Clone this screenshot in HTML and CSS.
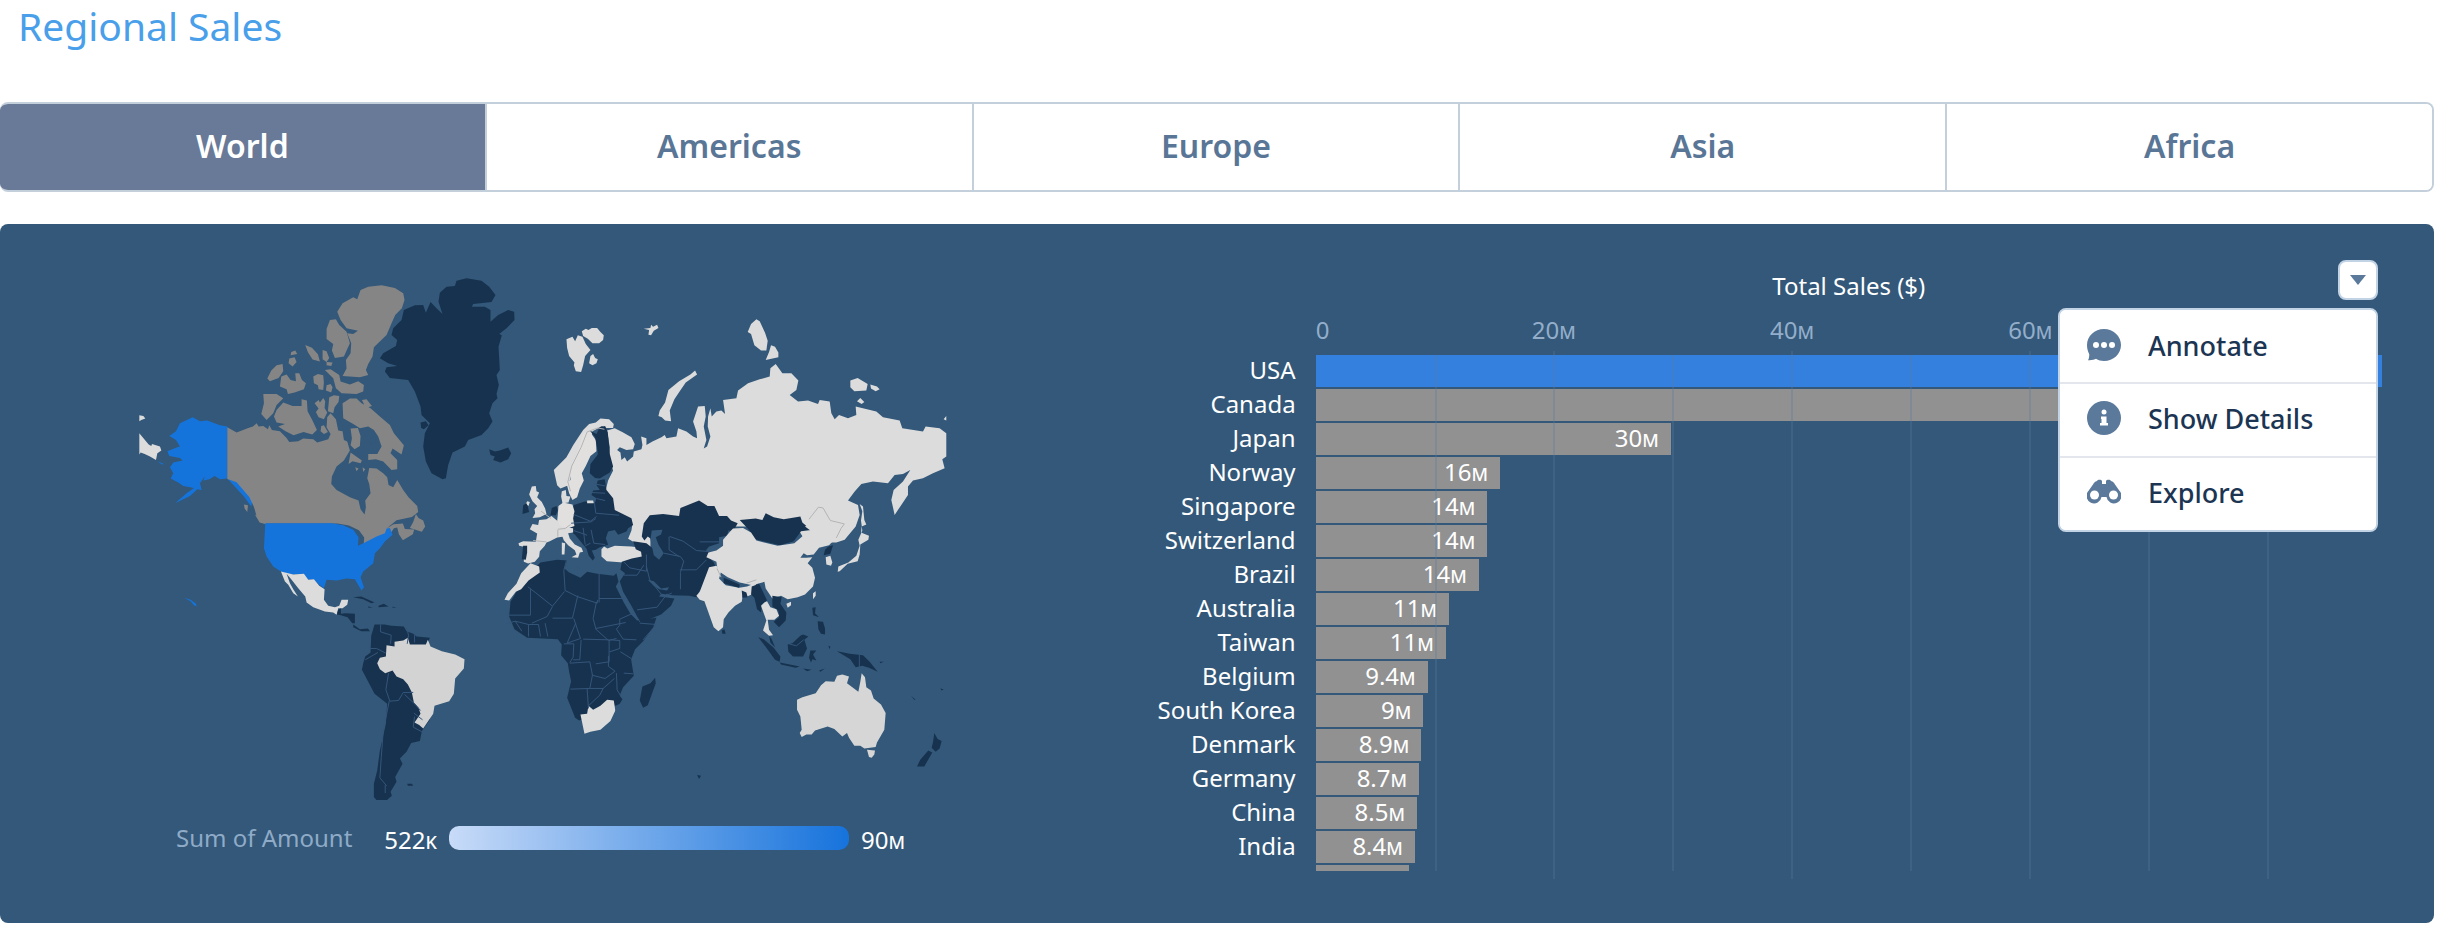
FILE: index.html
```html
<!DOCTYPE html>
<html lang="en">

<head>
    <meta charset="UTF-8">
    <meta name="viewport" content="width=device-width, initial-scale=1.0">
    <title>Regional Sales</title>
    <link rel="stylesheet" href="styles.css">
</head>

<body>
    <h1 class="title">Regional Sales</h1>

    <nav class="tabs">
        <button type="button" class="tab active">World</button>
        <button type="button" class="tab">Americas</button>
        <button type="button" class="tab">Europe</button>
        <button type="button" class="tab">Asia</button>
        <button type="button" class="tab">Africa</button>
    </nav>

    <main class="panel">
        <section class="map">
            <svg class="map__svg" viewBox="0 0 2520 1620" role="img" aria-label="Sum of Amount by country">
                <!-- north america -->
                <g>
                    <path class="usa" d="M218 472l22 12 22-2 38 14 22 4v156l-22 2-16-10-16 10-18 4 5-14-15 22 5 20-13-2-22 20-45 22 35-30 22-16-32-6-15-10-23-12 8-16-10-18 10-14 28-6-8-8-32-6-6-14 30-12 8-2-12-20-20-12 20-14 12-24zM322 656l28 10 12-2 16 26 20 26-4 24-22-30-22-24zM112 604l20 8-6 2zM192 1014l20 6 16 12 2 8-8-4-10-12z"/>
                    <path class="canada" d="M322 502l28 16 35-14 14-4 11-10 6 10 14-2 14 10 4-12 8 14 24 4 20 20 8 12 27-2 15-8 30 2 12 10 33-10 7-16-12-20 2-30 10-12 16 18 7 34 13 2 4 26 10 5 8 27-18 30-22 18-14 30-2 22 16 18 40 22 26 10 6 26 12 16 4-22-2-20 16-22-4-28-6-17 6-31 22 2 20 14 12 12 4 23 14 7 12-22 18 30 16 22 26 26 3 18-19 15-46 10-29 24 20-12 28-2 6 16 28 2-4 14-30 18-12-18-5-20-10 2-10 16-25 10-35 18-21 10 2-26-16-22-30-14-34-6H436l-26-22-8-28-14-30-38-44-28-10z"/>
                    <path class="canada" d="M888 762l-8 24-10 18 36 12 10-16-6-18-14-8zM405 764l22 10 14 20-22-6zM372 734l12 2-2 20-8-10zM700 112l12 6 10-28 23-10 40-4 40 8 25 16 4 20-8 25-20 20-11 25-15 35-24 23-14 14-4 28-13 22-7 18 7 15-25 7-52-4 12-22-2-26 14-20 2-30-12-30 18 2 14-10-34-7-18-25-10-25 16-25zM630 180l18-2 10 17 22 20 10 35-18 40-27 4-9-22 4-20-20-15v-30zM615 330l17-2 26 17 4 20 28 9 25-10 17 11-2 20-20 7-45-2-17-15-8-30zM556 255l20 8 18 20 6 22-22-6-14-22zM608 270l12 4 8 20-8 12-12-8zM620 306l18 2-4 10-14-2zM508 296l16-4 6 14-12 14-12-10zM514 276l12-4 6 10-20 4zM470 316l18-4 2 22-14 20-26 10-8-8 12-24zM484 350l16-6 12 16 16 4-2-24 12 0 8 20 12 10-6 18-28 10-20 4-4-14-20-8zM580 350l14-8 16 4 2 22-2 22-14-2-2-12-12-6zM620 376l12-4 6 10-4 16-16-6zM430 402l40 0 20 13-20 20-10 25-20 20-16-18 8-32zM470 450l20-22 28 10 27 0 0-20 16 4 2 32 14 26 14 30-14 14-26-8-30 10-24-12-22-14 20-8-25-4-8-18zM584 430l12-10 4 8 10-14 6 10-2 20 8 14-10 20-16-6-8-16 8-10zM628 412l14-6 16 2-2 18-12 16-4 18-16-6zM604 498l8-2 12 20-12 6-10-8zM668 430l22-14 20 0 15 14 27 15 28 25 30 25 12 25 30 36-7 28-27-18-6 14 20 20 0 28-17 2-25-25-22-7-23 2 0-18 27 0 13-22-10-30-13-20-17-10-25 5-20-13-30-17zM726 420l14-2 16 20-18 6zM692 506l22-2 8 24-2 30-16 10-12-12 4-20zM692 578l34 24-4 8-24-6-12 8zM706 622l10 4-6 8zM728 622l8 6-6 8z"/>
                    <path class="sea" d="M756 530l12 6-4 14-12 2-4-8z"/>
                    <path class="light" d="M58 466l12 2 6 8-12 4-6 4zM58 520l28 34 8 4 2-6 24 8 4 12-12 8-4 20-18-10-16-8-12-4-4 6z"/>
                    <path class="dark" d="M1005 78l5-16 30-7 45 7 23 18 19 25-12 21-55 6-4 8 39 0 17 10 0 35 23-20 30-15 18 5 1 25-24 25-22 17 8 4-10 34 4 70-10 15 7 30-7 27 3 13-15 15-10 30 10 25-13 20-20 20-40 15-10 20-37 18-13 37-7 40-10 3-33-18-17-35-8-45 5-40 15-30-25-25-3-25-17-45-20-35-55-6-15-19 5-13 32-4-27-8-25-15 10-15 38-22 4-18-17-15 5-20 25-25 7-30 33-14 25-1 8 23 14-32 18 19 18 17-12-37 4-27 20-18zM902 488l16-4 8 12-14 12-8-4zM1108 568l17 7 15-3 25-9 9 17-9 18-23 10-22-8 5-10-13-5z"/>
                </g>

                <!-- usa, central and south america -->
                <g transform="translate(0 720)">
                    <path class="usa" d="M436 70h200l34 6 30 14 16 22-2 26 21-10 35-18 25-10 5-14 10-2 8 21-23 20-15 20-15 15-5 30-30 25-8 17 10 30-7 10-13-22-7-12-25-2-30 6-30-2-8 25-14-10-18-17-18 2-10-18-32 2-20-2-17-7-23-15-20-30-8-25z"/>
                    <path class="light" d="M483 215l37 9 32-2 13 18 17-2 16 20 16 10-2 32 13 18 20 4 13-4 7-18 20 0-3 15-14 10-13 0-5 20-10-7-25-3-35-13-20-14-4-18-21-25-20-25-15-18 10 28 10 18 14 22-14-10-15-25-10-10z"/>
                    <path class="dark" d="M655 330l8-4 0 16 14-2 28 2 0 28-8 0-14-18-20-6-12-2zM700 374l20 14 24-2 6 8-26 0-24-12zM700 292l24-2 40 18-10 2-24-12zM776 318l16-6 14 8-30 2zM744 320l14 2-12 2zM818 321l12 1-12 2zM764 374l20 0 10 0 20 4 38 2 8 14 20 8 10 8 40 4-10 26 10 220-24 34-6 30-26 6-14 26-20 20 8 16-22 40 4 14-18 30 4 12-14 12 24 20-4 8-34-6-26-30 0-40 10-40 8-60 18-80 4-60-38-30-38-72 4-20 6-20 16-12 2-50zM862 852l14 0 4 6-16 0z"/>
                    <path class="brazil" d="M800 436l24 4 0-14 26-4 14-8 6 20 48 0 6-14 8 20 34 14 40 10 28 14-2 28-26 30-4 46-14 22-44 14-4 24-30 44-12-10-14-8 18-26-6-18-14-16-6-30-12-24-14-16-20-8-12-18-22 8-16-12-8-18 8-16 18-4z"/>
                    <path class="borders" d="M750 446l20 0 28 14M736 480l24-14 14-8M782 374l0 22 32 10-2 26M860 384l6 22-4 26M884 406l0 22M806 520l-8 50 12 34 26-2 14-24 30 0M854 584l30 28 18 20M882 640l26 20M808 604l-18 90-6 80-4 60 20 24M796 856l0 24M884 650l-4 32 26 14"/>
                </g>

                <!-- europe, russia -->
                <g transform="translate(1140 0)">
                    <path class="light" d="M322 512l23-7 25 13 25 14 10 20-5 16-20 2-20-8-8 8 10 8 3 22 10-8 7 13 18-15 2-15 23-7 3-13-4-25 16 5 0 20 18-10 27-13 10-7 5 10 30-5 5-25 25 10 20 15 12 5-2-20-10-30 15-45 20-2 3 32-6 30 8 40-8 26 10-6 10-30-8-30 1-30 7-25 4 25 14-15 15-3 11 10-6-42 40-5 5-23 30-22 35-12 30-8 2-25 16-13 20 28 27 0 21 22-6 28-20 15 25 20 30-3 30 10 5-12 30 5 5 35 10 18 13-13 27 10 25-10-2-25 62 15 20 17 50 10 8 23 62 10 8-15 42 5 20 15v70l-12 8 7 27-35 15-30 15-30 7-15 18 0 25-20 30-20 30-10-45 7-30 28-25 22-35-22 12-25 3-20 25-45-5-35 7-20 23-20 27 30 13 5 30-12 35-33 40-25 8-90 0-30-48H452l0 72-32-15-35-20 10-25 3-20-33-15-20-15-10-35-20-25 10-40 15-30-12-40 2-30z"/>
                    <path class="light" d="M200 238l18-8 8 14 8-18 14 4 10 22 14 18-16 18-6 28-6 20-16-2-6-18 2-8-16-20-6-24zM246 214l12-8 8 4 10-6 16 0 10 12 10 10-2 14-12 10-20 0-14-14-14-8zM272 288l8-6 6 12 8 4-4 12-12 6-10-6zM432 206l20-2 2-10 6 6 12-6 4 10-14 8-8 14-8-2 2-14zM770 178l10 6 16 34 8 24-4 30-16 0-20-16-10-34-10-6 10-24zM814 256l12 4 10 18 0 14-38 8 10-24zM586 332l6 12-34 24-18 26-16 24-14 34 4 32-18-2-10-10-10-4 4-16 16-24 10-38 32-26 34-20zM1052 362l22-8 30 18-4 20-36 2-12-12zM1112 374l20 6 8 8-12 6-14-8zM1072 424l10-10 12 12-8 6zM1332 478l8-10 0 14z"/>
                    <path class="light" d="M162 630l38-38 20-36 30-46 18-18 20-4 14-12 26 2 14 14-2 12-20 0-14-6-16 10-12 6-4 20-18 26-12 30-28 50-10 36-24 10-10-10z"/>
                    <path class="sweden" d="M250 520l18-8 20 28 2 34-18 14-14 30-12 22 6 22-12 24-8 26-14 8-10-20-8-30 12-10 4-50 16-30z"/>
                    <path class="dark" d="M270 512l20 10 10-20 16-4 8 20 4 40 2 24 10 38-10 18-30 18-14-2-16-14 2-28 22-28-2-22-6-30z"/>
                    <path class="light" d="M96 680l12-2 2 16 8 4-6 14 14 14 10 20 4 16-20 10-22 2 8-14-2-12 8-10-14-14-10-20zM82 724l8 2-4 12-8-6zM186 694l12-4 2 18 12 2-6 18-18 2-4-20z"/>
                    <path class="dark" d="M70 736l10-6 4 10 4 16-20 6zM156 744l14-6 4 14-6 14-16 0zM222 735l33-10 30 5 5-15-15-10 5-13 20-2-10-15 4-13 21-4 5 32 20 25 5 35 50 25 5 20-15 10-5 10-25 10-10-15-20 5-7 20 7 20-25 7-12 8-12 2 9 22-6 8-12-14-7-22-17-20-18-22-12-8-5-20 3-25z"/>
                    <path class="light" d="M262 722l18 0 2 8-20 0z"/>
                    <path class="germany" d="M176 738l14-10 28 6 6 20-4 22 4 22-20 8-24-2-8-20 2-20z"/>
                    <path class="dark" d="M450 766l40-4 48 6 4-24 56-22 26 16 20 0 14 30 24 0 12 14 20 8-14 24-14-2-4 16-24 4 0 18-30 10-10 12 18 6-16 30-14 8-46-4-36 0-36 4-8-24-8-40-28-22-10 12-8-12 6-40zM720 780l48-4 20 4 10-20 24 12 30 6 50-8 6 18 26 22-30 4-22 30-42 12-74-18-18-28z"/>
                    <path class="borders" d="M284 730l4 30 70 6M276 698l40 2M290 716l26 6M284 672l32 6M290 770l-18 14-50-20"/>
                </g>

                <!-- europe south, africa, asia, oceania -->
                <g transform="translate(1140 720)">
                    <path class="light" d="M98 72l17 3 3-15 22-2 15-10 20 17 5 14 20 4 20 2 0 13-15 2 5 16 15 18 20 10 5 12-10 2-5 16-20-2 15-8-5-13-20-15-13-15-4-10-16 2-22 11-10 4-5 10-15 16-2 17-13 15-20 5-13-5 0-45-14-3-2-8 14-6 38 2 4-25-22-13zM186 128l10 2-2 34-8 0zM305 148l8-8 10 6 22-8 50 2 30 4 2 30-36 6-20 8-50-4-16-14z"/>
                    <path class="dark" d="M70 138l12 0 0 20-4 22-12-2z"/>
                    <path class="dark" d="M400 124l40 6 20 16 28 18 34-2 30 6 56-16 34 36 8 18-20 20-10 30-20 16-10 20-22-4-50-2-34-4-6 8 46 6-10 22-30 26-60 24-10-14-20-38-24-40-10-32 16-24-14-10 4-24 30-10 30-6-2-14-16-8z"/>
                    <path class="dark" d="M122 188l50-8 30 2-8 24 14 12 34 16 20-18 30 6 50 6 8-8 6 26-8 14 24 48 20 34 20 20 58-8-10 30-30 40-24 24-12 30 8 50-32 34-10 24 8 12-8 14-12 6-20-6-60 40-30 10-12-8-24-60 12-50-6-28-4-26-20-24 2-32-12-16-44-2-48-2-38-26-16-38 4-44 12-20 24-44zM466 534l2 16-24 66-14 8-10-22 8-42 24-10zM808 408l8 10 10 24-14-14z"/>
                    <path class="light" d="M92 190l26 10 2 18-34 24-22 26-16 8-20 26-14-2 10-20 26-28 14-32zM242 644l20-2 4-24 14 12 22-12 20-18 20 2 4 26 0 6-14 30-30 26-30 6-18 6z"/>
                    <path class="borders" d="M200 182l-8 30 4 60 36 18 60 20 2-10M298 222v86M298 296h78M194 275l-36 44-50-40-24-18M92 266l0 80-70 0M158 320l-16 30-46 20M158 355l60 0 16-68M222 356l20 60-40 14 26-60M290 306l-10 50 8 30 40-8 50-10M358 378l-8 10 20 30 40 2M286 386l40 36 24-6M244 420l-4 60-20 0M250 418l78 2 0 66-40 6M330 420l30 2 0 24-30 10M362 456l32 20M210 490l60-4 8 40-8 40-58 2M276 526l40 10 30-22-20-14 0-32M270 566h40l34-30M350 520l2 50 14 24M262 566l4 60M310 566l-10 20-34 32M192 432l30 0-2 40-10 16M20 372l26-8 20 30M46 364l40 10 0 36M86 374l30 0 6 36M136 370l8 40M380 296l20 40 20 30M400 340l-40 18 0 20M420 370l50 4-40 46M372 520l28 2M370 184l20 20 50 10 0-50M372 226l40 0 20-30M440 200l10 40 40 50 26-10M412 330l60-8 30-40M492 160l50 10 10 14-10 34 0 50M540 210l50 0 30-30M508 110l0 40 30 20M510 110l40 14 40 28 50 4M600 126l60 0M214 70l60-4 14-10M250 84l6 50M274 90l8 40 34 4M222 92l40 14M272 130l-16 8"/>
                    <path class="sea" d="M200 184l40 20-30 14zM456 92l32-2-4 14-16 8 8 22 16 26-14 20-16-14-6-28-4-20zM444 240l18 4 22 22 24-4-6 10-24-4-16-10z"/>
                    <path class="light" d="M626 158l24-6 20-14 0-18 24-28 6-6 30-2 24 14 16 24 64 16 50-8 26-22 30-10-24-18 18-10 12-26 20-12 14 4 12 30 22 14 14-6-6 18-18 28-16 16-30 8-16 20-20 2-10-6-10 14 18 0 18-2-14 18 14 14 8 30-6 26-24 24-22 8-30 6-20-10-26 8-20-30-4-20-36 10-38-8-36-16-30-20-4-26-30-14z"/>
                    <path class="light" d="M628 202l22-4 14 18-6 20 20 20 40 8 24-4 24-10 8 14-18 20-14 6-12-8-4 24-20 12-20 20-14 20-2 24-14 12-14-12-18-50-10-28-14-4-10-12 10-12zM978 172l14-4 6 20-4 10-14-4zM940 280l8-6 0 14-8 10zM860 312l14-6 0 10-10 8zM1080 12l10 8 4 40 6 14-14 6-2 18 24 10-2 12-24 14-2 30-6 20-30 8-24 22-6 2 2-16 30-12 24-20 10-30-4-18 12-28-4-30 4-28z"/>
                    <path class="dark" d="M756 260l22-8 10 20 14 30-16 12-2 24-12-10-8-34-10-10zM672 234l20 8 28 12-2 10-46-14zM726 272l14 6 4 14-16 2zM818 288l28 4-4 20 18 26-2 24-20 20-16-16 16-14-2-20-18-12zM976 150l10-10 14-4-8 26-20 4zM666 392l8-4 4 14-10 0zM776 412l16 6 30 26 20 26-2 16-14-6-26-36zM840 488l60 12-12 4-44-10zM864 434l14-4 24-22 8-4 16 6-12 10 8 26-12 24-30 0-14-14zM932 452l18 0-10 12 10 18-12-4-4 10-6-14zM938 324l10-2-2 18 12 12-18-6zM954 364l16 2 6 20 0 18-12-2-8-14zM1012 454l20 4 18 4 40 4 20 20 24 30-26-12-20-6-20 4-16-24-24-14zM1304 700l10 18 12 6-6 22-12 10-12-12 4-16zM1286 752l12 6-24 42-22 0 10-20zM592 826l12 2-6 10zM1322 566l10 2-6 4zM1234 588l14 12-4 0zM910 506l26 4-14 4zM958 512l18-6-14 10zM986 438l6 2-2 8zM1140 486l12 0-10 4z"/>
                    <path class="light" d="M784 318l10-10 8-4 10 18 18 6 8 20-14 12-20 0 4 30 12 16-12 2-18-16 10-30z"/>
                    <path class="australia" d="M892 600l16-8 40-12 16-24 14-12 26 2 8-18 16-4 20 6-6 20 34 26 6-30 4-26 10 12 4 30 14 10 8 24 22 18 14 26-4 50-22 38-4 14-34 4-12-8-18 0-16-24-6-14-14 10-24-22-20-8-38 12-10 12-16 0-14 8-6-12 6-10-4-40-10-20zM1102 750l24 2-2 12-8 10-8-2z"/>
                    <path class="seams" d="M124 34l30 22M174 88l22-2 16-12M174 110l0-20M928 58l28-36 14 2 22 38 42 10-10 14-14 28M652 206l12 26M140 126l-40-4M740 250l30-10"/>
                    <path class="borders" d="M1079 464v38M868 432l22 6 22-18"/>
                </g>
                <path class="seams" d="M1352 694l-8-28 12-48 28-56 18-46 32-12 20 4"/>
            </svg>

            <div class="legend">
                <span class="legend__name">Sum of Amount</span>
                <span class="legend__value">522<small>K</small></span>
                <span class="legend__bar"></span>
                <span class="legend__value">90<small>M</small></span>
            </div>
        </section>

        <section class="chart">
            <h2 class="chart__title">Total Sales ($)</h2>
            <div class="chart__axis">
                <span>0</span>
                <span>20<small>M</small></span>
                <span>40<small>M</small></span>
                <span>60<small>M</small></span>
            </div>
            <div class="chart__plot">
                <ol class="chart__rows">
                    <li><span class="name">USA</span><div class="track"><div class="bar bar--blue" style="width: 100%"></div></div></li>
                    <li><span class="name">Canada</span><div class="track"><div class="bar" style="width: 92%"></div></div></li>
                    <li><span class="name">Japan</span><div class="track"><div class="bar" style="width: 33.3%">30<small>M</small></div></div></li>
                    <li><span class="name">Norway</span><div class="track"><div class="bar" style="width: 17.3%">16<small>M</small></div></div></li>
                    <li><span class="name">Singapore</span><div class="track"><div class="bar" style="width: 16.1%">14<small>M</small></div></div></li>
                    <li><span class="name">Switzerland</span><div class="track"><div class="bar" style="width: 16.1%">14<small>M</small></div></div></li>
                    <li><span class="name">Brazil</span><div class="track"><div class="bar" style="width: 15.3%">14<small>M</small></div></div></li>
                    <li><span class="name">Australia</span><div class="track"><div class="bar" style="width: 12.5%">11<small>M</small></div></div></li>
                    <li><span class="name">Taiwan</span><div class="track"><div class="bar" style="width: 12.2%">11<small>M</small></div></div></li>
                    <li><span class="name">Belgium</span><div class="track"><div class="bar" style="width: 10.5%">9.4<small>M</small></div></div></li>
                    <li><span class="name">South Korea</span><div class="track"><div class="bar" style="width: 10.1%">9<small>M</small></div></div></li>
                    <li><span class="name">Denmark</span><div class="track"><div class="bar" style="width: 9.9%">8.9<small>M</small></div></div></li>
                    <li><span class="name">Germany</span><div class="track"><div class="bar" style="width: 9.7%">8.7<small>M</small></div></div></li>
                    <li><span class="name">China</span><div class="track"><div class="bar" style="width: 9.5%">8.5<small>M</small></div></div></li>
                    <li><span class="name">India</span><div class="track"><div class="bar" style="width: 9.3%">8.4<small>M</small></div></div></li>
                    <li><span class="name"></span><div class="track"><div class="bar" style="width: 8.8%"></div></div></li>
                </ol>
                <div class="chart__grid">
                    <i></i><i></i><i></i><i></i><i></i><i></i><i></i><i></i>
                </div>
            </div>
        </section>

        <div class="actions">
            <button type="button" class="actions__toggle" aria-label="Actions" aria-expanded="true">
                <svg width="16" height="10" viewBox="0 0 16 10"><path d="M0 0h16L8 10z"/></svg>
            </button>
            <div class="actions__menu">
                <button type="button">
                    <svg width="34" height="34" viewBox="0 0 34 34">
                        <path d="M17 1c9.400 0 17 7 17 16s-7.600 16-17 16c-3 0-5.600-.8-8-2.200-1.600 1-4.600 1.700-8 1.400 1-1.500 1.400-4.200 1.200-6.200C.8 23.400 0 20.200 0 17 0 8 7.600 1 17 1z"/>
                        <g class="hole"><circle cx="9" cy="17" r="3"/><circle cx="17" cy="17" r="3"/><circle cx="25" cy="17" r="3"/></g>
                    </svg>
                    Annotate
                </button>
                <button type="button">
                    <svg width="34" height="34" viewBox="0 0 34 34">
                        <circle cx="17" cy="17" r="17"/>
                        <g class="hole"><circle cx="17" cy="11" r="2.500"/><path d="M14 15.500h5.500V22H21v2.500h-8V22h1.500v-4H14z"/></g>
                    </svg>
                    Show Details
                </button>
                <button type="button">
                    <svg width="34" height="34" viewBox="0 0 34 34">
                        <path d="M10 6c.5-1.600 4.500-1.600 5 0v3h4V6c.5-1.600 4.500-1.600 5 0 2 .6 3 1.800 4 3.600l4.600 6.400A7.500 7.500 0 1 1 19.500 22h-5A7.500 7.500 0 1 1 1.400 16L6 9.600c1-1.800 2-3 4-3.600z"/>
                        <g class="hole"><circle cx="7.500" cy="20" r="4.500"/><circle cx="26.500" cy="20" r="4.500"/></g>
                    </svg>
                    Explore
                </button>
            </div>
        </div>
    </main>
</body>

</html>
```
FILE: styles.css
```css
* {
    margin: 0;
    padding: 0;
    box-sizing: border-box;
}

body {
    padding-right: 26px;
    background-color: #fff;
    font-family: "Noto Sans", "Open Sans", sans-serif;
    font-size: 24px;
    line-height: 32px;
}

button {
    border: 0;
    background: #fff;
    font-family: inherit;
    cursor: pointer;
}

small {
    font-size: 18px;
    font-weight: 500;
    line-height: 18px;
}

.title {
    height: 102px;
    padding-left: 18px;
    color: #4a9fea;
    font-size: 39px;
    font-weight: 400;
    line-height: 52px;
}

/* tabs */
.tabs {
    display: flex;
    height: 90px;
    border: 2px solid #c3d0dc;
    border-left: 0;
    border-radius: 8px;
    overflow: hidden;
}

.tab {
    flex: 1;
    padding-bottom: 4px;
    border-left: 2px solid #c3d0dc;
    color: #597696;
    font-size: 32px;
    font-weight: 600;
}

.tab:first-child {
    border-left: 0;
}

.tab.active {
    background-color: #687a98;
    color: #fff;
}

/* panel */
.panel {
    position: relative;
    display: grid;
    grid-template-columns: 46% 1fr;
    margin-top: 32px;
    padding: 36px 0 44px;
    border-radius: 8px;
    background-color: #335879;
    color: #fff;
}

/* map */
.map {
    padding: 0 160px 0 120px;
}

.map__svg {
    display: block;
    width: 100%;
}

.map path {
    stroke-linejoin: round;
}

.usa { fill: #1574dc; }
.canada { fill: #858585; }
.light { fill: #dcdcdc; }
.sweden { fill: #e2dfdf; }
.germany { fill: #e2dfdf; }
.brazil { fill: #d3d3d3; }
.australia { fill: #d6d6d6; }
.dark { fill: #17324f; }
.sea { fill: #335879; }

.borders {
    fill: none;
    stroke: #34557a;
    stroke-width: 3;
}

.seams {
    fill: none;
    stroke: #b4b4b4;
    stroke-width: 3;
}

.legend {
    display: flex;
    align-items: center;
    gap: 12px;
    padding: 20px 0 0 56px;
}

.legend__name {
    margin-right: 20px;
    color: #8fabc8;
}

.legend__value {
    padding-top: 4px;
}

.legend__bar {
    width: 400px;
    height: 24px;
    border-radius: 10px;
    background: linear-gradient(to right, #c8dbf8, #1673dc);
}

/* chart */
.chart {
    padding: 10px 52px 0 0;
}

.chart__title {
    margin-left: 196px;
    font-size: 24px;
    font-weight: 400;
    text-align: center;
}

.chart__axis {
    display: grid;
    grid-template-columns: 11.17% repeat(3, 22.34%);
    margin: 12px 0 5px 196px;
    color: #93aecb;
    text-align: center;
}

.chart__axis span:first-child {
    text-align: left;
}

.chart__plot {
    position: relative;
    padding-bottom: 8px;
}

.chart__rows {
    height: 520px;
    padding-top: 4px;
    overflow: hidden;
    list-style: none;
}

.chart__rows li {
    display: grid;
    grid-template-columns: 176px 1fr;
    gap: 20px;
    height: 34px;
    line-height: 30px;
    text-align: right;
}

.bar {
    height: 32px;
    padding-right: 12px;
    background-color: #919191;
}

.bar--blue {
    background-color: #3480de;
}

/* vertical lines, drawn over the bars */
.chart__grid {
    position: absolute;
    inset: 0 0 0 198px;
    display: grid;
    grid-template-columns: repeat(8, 11.17%);
}

.chart__grid i {
    margin: 4px 0 8px;
    border-right: 2px solid rgba(88, 122, 158, 0.3);
}

.chart__grid i:nth-child(even) {
    margin: 0;
}

/* actions menu */
.actions {
    position: absolute;
    top: 36px;
    right: 56px;
    display: flex;
    flex-direction: column;
    align-items: flex-end;
    gap: 8px;
}

.actions__toggle {
    display: flex;
    align-items: center;
    justify-content: center;
    width: 40px;
    height: 40px;
    border: 2px solid #c3d3e6;
    border-radius: 8px;
}

.actions svg {
    fill: #5a799b;
}

.actions .hole {
    fill: #fff;
}

.actions__menu {
    width: 320px;
    border: 2px solid #c3d3e6;
    border-radius: 8px;
    background-color: #fff;
    overflow: hidden;
}

.actions__menu button {
    display: flex;
    align-items: center;
    gap: 27px;
    width: 100%;
    height: 74px;
    padding: 0 0 4px 27px;
    color: #1b3553;
    font-size: 27px;
    font-weight: 500;
}

.actions__menu button:first-child {
    height: 72px;
    padding-bottom: 2px;
}

.actions__menu button + button {
    border-top: 2px solid #e3e6ec;
}
```
